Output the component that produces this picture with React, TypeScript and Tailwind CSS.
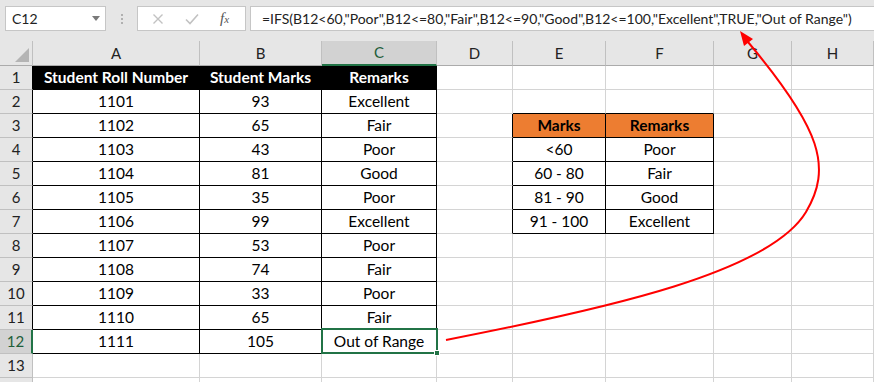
import React from "react";

const colNames = ["A", "B", "C", "D", "E", "F", "G", "H"];

const data: Record<number, string[]> = {
  1: ["Student Roll Number", "Student Marks", "Remarks", "", "", "", "", ""],
  2: ["1101", "93", "Excellent", "", "", "", "", ""],
  3: ["1102", "65", "Fair", "", "Marks", "Remarks", "", ""],
  4: ["1103", "43", "Poor", "", "<60", "Poor", "", ""],
  5: ["1104", "81", "Good", "", "60 - 80", "Fair", "", ""],
  6: ["1105", "35", "Poor", "", "81 - 90", "Good", "", ""],
  7: ["1106", "99", "Excellent", "", "91 - 100", "Excellent", "", ""],
  8: ["1107", "53", "Poor", "", "", "", "", ""],
  9: ["1108", "74", "Fair", "", "", "", "", ""],
  10: ["1109", "33", "Poor", "", "", "", "", ""],
  11: ["1110", "65", "Fair", "", "", "", "", ""],
  12: ["1111", "105", "Out of Range", "", "", "", "", ""],
  13: ["", "", "", "", "", "", "", ""],
  14: ["", "", "", "", "", "", "", ""],
};

const formula =
  '=IFS(B12<60,"Poor",B12<=80,"Fair",B12<=90,"Good",B12<=100,"Excellent",TRUE,"Out of Range")';

const inTable = (r: number, c: number) =>
  (r >= 1 && r <= 12 && c >= 0 && c <= 2) || (r >= 3 && r <= 7 && c >= 4 && c <= 5);

const gridCols = "grid grid-cols-[33px_167px_122px_115px_76px_93px_108px_78px_82px]";

const FormulaBar = () => (
  <div className="h-[41px] bg-[#e6e6e6] flex items-start pt-[6px] pl-[5px]">
    <div className="w-[101px] h-[25px] bg-white border border-[#c6c6c6] flex items-center justify-between pl-[6px] pr-[5px] text-[14px] text-[#222]">
      <span>C12</span>
      <svg width="8" height="5" viewBox="0 0 8 5">
        <path d="M0 0 H8 L4 5 Z" fill="#7a7a7a" />
      </svg>
    </div>
    <div className="w-[31px] h-[25px] flex flex-col items-center justify-center gap-[2px]">
      <span className="w-[2px] h-[2px] bg-[#b0b0b0]" />
      <span className="w-[2px] h-[2px] bg-[#b0b0b0]" />
      <span className="w-[2px] h-[2px] bg-[#b0b0b0]" />
    </div>
    <div className="w-[109px] h-[25px] bg-white border border-[#c6c6c6] flex items-center">
      <svg width="12" height="12" viewBox="0 0 12 12" className="ml-[14px]">
        <path d="M1.5 1.5 L10.5 10.5 M10.5 1.5 L1.5 10.5" stroke="#c2c2c2" strokeWidth="1.4" />
      </svg>
      <svg width="14" height="12" viewBox="0 0 14 12" className="ml-[21px]">
        <path d="M1 6.5 L5 10.5 L13 1.5" stroke="#c2c2c2" strokeWidth="1.6" fill="none" />
      </svg>
      <span className="ml-[21px] text-[15px] italic text-[#555] font-['Liberation_Serif',serif] leading-none">
        f<span className="text-[11px]">x</span>
      </span>
    </div>
    <div className="ml-[4px] flex-1 h-[25px] bg-white border border-[#c6c6c6] border-r-0 flex items-center pl-[11px] text-[14px] text-[#222] whitespace-nowrap overflow-hidden">
      {formula}
    </div>
  </div>
);

const ColumnHeader = () => (
  <div className={`${gridCols} h-[25px]`}>
    <div className="bg-[#e6e6e6] border-r border-r-[#c0c0c0] border-b border-b-[#ababab] relative">
      <svg width="14" height="14" viewBox="0 0 14 14" className="absolute right-[3px] bottom-[3px]">
        <path d="M14 0 V14 H0 Z" fill="#b4b4b4" />
      </svg>
    </div>
    {colNames.map((n) => (
      <div
        key={n}
        className={
          n === "C"
            ? "bg-[#d2d2d2] border-r border-r-[#c0c0c0] border-b-2 border-b-[#217346] flex items-center justify-center text-[15px] text-[#1e5e3a]"
            : "bg-[#e6e6e6] border-r border-r-[#c0c0c0] border-b border-b-[#ababab] flex items-center justify-center text-[15px] text-[#222]"
        }
      >
        {n}
      </div>
    ))}
  </div>
);

const Cell = ({ r, c, v }: { r: number; c: number; v: string }) => {
  const rightBlack = inTable(r, c) || inTable(r, c + 1);
  const bottomBlack = inTable(r, c) || inTable(r + 1, c);
  const blackHead = r === 1 && c <= 2;
  const orangeHead = r === 3 && (c === 4 || c === 5);
  return (
    <div
      className={[
        "h-[24px] border-r border-b flex items-center justify-center whitespace-nowrap text-[15.5px]",
        rightBlack ? "border-r-black" : "border-r-[#d4d4d4]",
        bottomBlack ? "border-b-black" : "border-b-[#d4d4d4]",
        blackHead
          ? "bg-black text-white font-bold"
          : orangeHead
            ? "bg-[#ed7d31] text-black font-bold"
            : "bg-white text-black",
      ].join(" ")}
    >
      {v}
    </div>
  );
};

const RowNumber = ({ r }: { r: number }) => (
  <div
    className={
      r === 12
        ? "h-[24px] bg-[#d2d2d2] border-r-2 border-r-[#217346] border-b border-b-[#c0c0c0] flex items-center justify-center text-[15px] text-[#1e5e3a]"
        : r <= 12
          ? "h-[24px] bg-[#e6e6e6] border-r border-r-black border-b border-b-[#c0c0c0] flex items-center justify-center text-[15px] text-[#222]"
          : "h-[24px] bg-[#e6e6e6] border-r border-r-[#c0c0c0] border-b border-b-[#c0c0c0] flex items-center justify-center text-[15px] text-[#222]"
    }
  >
    {r <= 13 ? r : ""}
  </div>
);

const Arrow = () => (
  <svg className="absolute inset-0 pointer-events-none" width="874" height="382" viewBox="0 0 874 382">
    <path
      d="M446 340 C 610 308, 770 272, 806 212 C 832 168, 822 130, 748 42"
      fill="none"
      stroke="#ff0000"
      strokeWidth="2"
    />
    <path d="M740 31 L753 39 L744 46 Z" fill="#ff0000" />
  </svg>
);

export default function App() {
  return (
    <div className="w-[874px] h-[382px] overflow-hidden relative bg-white font-['Lato',sans-serif]">
      <FormulaBar />
      <ColumnHeader />
      {Object.keys(data).map((k) => {
        const r = Number(k);
        return (
          <div key={r} className={gridCols}>
            <RowNumber r={r} />
            {data[r].map((v, c) => (
              <Cell key={c} r={r} c={c} v={v} />
            ))}
          </div>
        );
      })}
      <div className="absolute left-[321px] top-[328px] w-[117px] h-[26px] border-2 border-[#217346] pointer-events-none">
        <span className="absolute right-[-4px] bottom-[-4px] w-[6px] h-[6px] bg-[#217346] border border-white" />
      </div>
      <Arrow />
    </div>
  );
}
